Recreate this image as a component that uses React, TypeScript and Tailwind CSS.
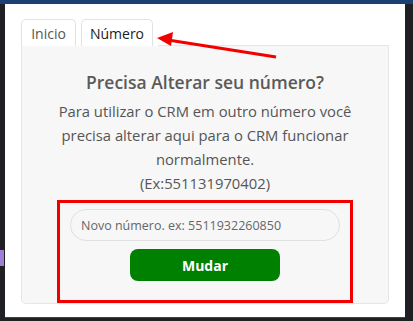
import React from "react";

export default function App() {
  return (
    <div
      className="relative w-[413px] h-[321px] overflow-hidden bg-[#1f2024]"
      style={{ fontFamily: '"Open Sans", "Liberation Sans", sans-serif' }}
    >
      {/* top strip of the page behind */}
      <div className="h-[4px] bg-[#1b4173]" />
      <div className="ml-[5px] w-[400px] h-[314px] bg-white border-b border-[#444] px-[16px] pt-[15px]">
        {/* tabs */}
        <div className="flex gap-[5px] h-[27px]">
          <div className="w-[55px] h-[27px] flex items-center justify-center border border-b-0 border-[#e2e2e2] rounded-t-[5px] bg-white text-[14px] text-[#555]">
            Inicio
          </div>
          <div className="w-[72px] h-[27px] flex items-center justify-center border border-b-0 border-[#e2e2e2] rounded-t-[5px] bg-white text-[14px] text-[#222]">
            Número
          </div>
          <div className="flex-1 border-b border-[#e6e6e6]" />
        </div>
        {/* panel */}
        <div className="w-[368px] h-[258px] bg-[#f7f7f7] border border-t-0 border-[#e6e6e6] rounded-b-[5px] flex flex-col items-center pt-[21px]">
          <h2 className="text-[17.5px] leading-[30px] font-semibold text-[#5a5a5a]">Precisa Alterar seu número?</h2>
          <p className="mt-[2px] text-[14.8px] leading-[24px] text-[#555] text-center w-[320px]">
            Para utilizar o CRM em outro número você precisa alterar aqui para o CRM funcionar normalmente.
            <br />
            (Ex:551131970402)
          </p>
          <div className="mt-[5px] w-[296px] h-[104px] border-[3px] border-[#f20000] flex flex-col items-center pt-[6px]">
            <input
              className="w-[270px] h-[32px] rounded-full border border-[#e0e0e0] bg-[#f7f7f7] px-[10px] text-[12.5px] text-[#555] placeholder:text-[#666] outline-none"
              placeholder="Novo número. ex: 5511932260850"
            />
            <button className="mt-[8px] w-[150px] h-[32px] rounded-[8px] bg-[#008000] text-white text-[14px] font-bold">
              Mudar
            </button>
          </div>
        </div>
      </div>
      {/* small purple thing at the left edge */}
      <div className="absolute left-0 top-[250px] w-[4px] h-[16px] bg-[#9d7fd6]" />
      {/* red annotation arrow */}
      <svg className="absolute left-0 top-0" width="413" height="321" viewBox="0 0 413 321">
        <line x1="276" y1="57" x2="168" y2="40" stroke="#f20000" strokeWidth="3" />
        <polygon points="157,38 173,32 171,46" fill="#f20000" />
      </svg>
    </div>
  );
}
